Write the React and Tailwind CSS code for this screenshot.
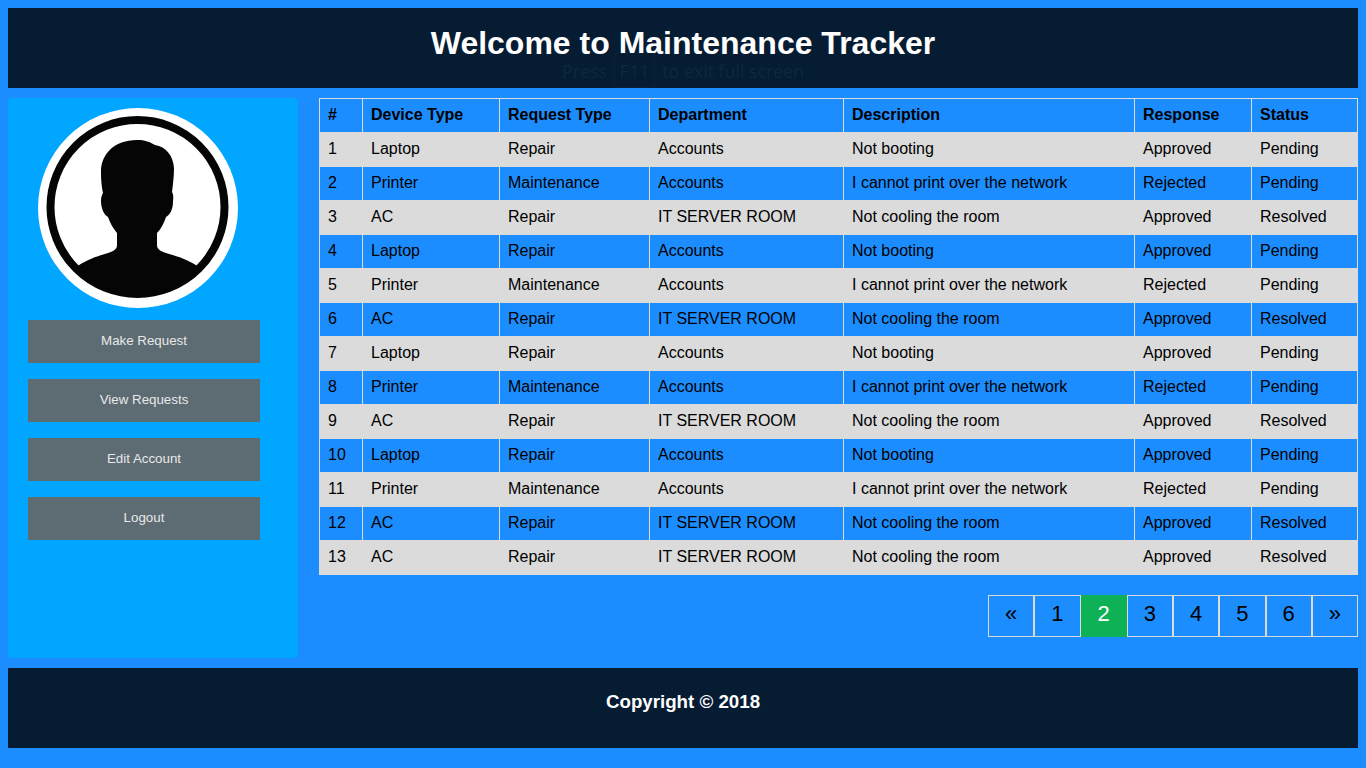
const H = ["#", "Device Type", "Request Type", "Department", "Description", "Response", "Status"];
const L = ["Laptop", "Repair", "Accounts", "Not booting", "Approved", "Pending"];
const P = ["Printer", "Maintenance", "Accounts", "I cannot print over the network", "Rejected", "Pending"];
const A = ["AC", "Repair", "IT SERVER ROOM", "Not cooling the room", "Approved", "Resolved"];
const ROWS = [L, P, A, L, P, A, L, P, A, L, P, A, A];
const W = ["w-[43px]", "w-[137px]", "w-[150px]", "w-[194px]", "w-[291px]", "w-[117px]", "w-[106px]"];
const NAV = ["Make Request", "View Requests", "Edit Account", "Logout"];
const PAGES = ["«", "1", "2", "3", "4", "5", "6", "»"];

function Avatar() {
  return (
    <svg width="200" height="200" viewBox="0 0 200 200" className="ml-[30px] block">
      <circle cx="100" cy="100" r="100" fill="#fff" />
      <circle cx="99.5" cy="99" r="87" fill="#fff" stroke="#050505" strokeWidth="8" />
      <path
        fill="#050505"
        d="M39.7 158 C50 151 60 148 70 145 C76 143 79 141 79 137 L79 125 C75 120 72 115 70 109 C66 107 63 100 63 93 C63 89 64 87 65 85 C63 75 63 68 63 62 C64 46 76 32 99 32 C107 32 112 34 117 37 C128 39 135 47 136 60 C136 68 135 76 134 84 C136 87 135 92 135 94 C135 101 132 107 128 109 C126 115 123 121 119 125 L119 137 C119 141 122 143 128 145 C138 148 149 151 159.3 158 A84 84 0 0 1 39.7 158 Z"
      />
    </svg>
  );
}

export default function App() {
  return (
    <div className="relative min-h-[768px] bg-[#1c8dff] p-2 font-['Liberation_Sans',Arial,sans-serif] text-black">
      <header className="h-20 bg-[#061c33] pt-[17px] text-center text-[32px] font-bold leading-9 text-white">
        Welcome to Maintenance Tracker
      </header>

      <div className="pointer-events-none absolute left-[562px] top-[53px] flex h-[35px] items-center gap-[7px] font-['Open_Sans',sans-serif] text-[17.75px] leading-6 text-[#0f2740]">
        <span>Press</span>
        <span className="flex h-[35px] items-center border border-[#0a2036] px-[5px]">F11</span>
        <span>to exit full screen</span>
      </div>

      <div className="mt-[10px] flex h-[560px] items-start">
        <aside className="h-full w-[290px] rounded-[4px] bg-[#00a6ff] pt-[10px]">
          <Avatar />
          <nav className="mt-3 flex flex-col gap-4 pl-5">
            {NAV.map((n) => (
              <button
                key={n}
                className="h-[43px] w-[232px] bg-[#5d6b73] pb-[3px] text-center text-[13.33px] leading-[15px] text-[#e8e8e8]"
              >
                {n}
              </button>
            ))}
          </nav>
        </aside>

        <main className="ml-[21px] w-[1039px]">
          <table className="w-[1038px] table-fixed border-collapse text-[16px]">
            <colgroup>
              {W.map((w) => (
                <col key={w} className={w} />
              ))}
            </colgroup>
            <thead>
              <tr className="bg-[#1c8dff]">
                {H.map((h) => (
                  <th key={h} className="h-[34px] border border-[#dbdbdb] px-2 pb-[2px] text-left font-bold">
                    {h}
                  </th>
                ))}
              </tr>
            </thead>
            <tbody>
              {ROWS.map((r, i) => (
                <tr key={i} className={i % 2 === 0 ? "bg-[#dbdbdb]" : "bg-[#1c8dff]"}>
                  <td className="h-[34px] border border-[#dbdbdb] px-2 pb-[2px]">{i + 1}</td>
                  {r.map((c, j) => (
                    <td key={j} className="h-[34px] border border-[#dbdbdb] px-2 pb-[2px]">
                      {c}
                    </td>
                  ))}
                </tr>
              ))}
            </tbody>
          </table>

          <div className="mt-5 flex justify-end">
            {PAGES.map((p) => (
              <span
                key={p}
                className={
                  p === "2"
                    ? "flex h-[42px] items-center bg-[#0fb156] px-[17px] pb-[5px] text-[22px] text-white"
                    : "flex h-[42px] items-center border border-[#dbdbdb] px-4 pb-[5px] text-[22px]"
                }
              >
                {p}
              </span>
            ))}
          </div>
        </main>
      </div>

      <footer className="mt-[10px] h-20 bg-[#061c33] pt-[23px] text-center text-[18.72px] font-bold leading-[22px] text-white">
        Copyright © 2018
      </footer>
    </div>
  );
}
